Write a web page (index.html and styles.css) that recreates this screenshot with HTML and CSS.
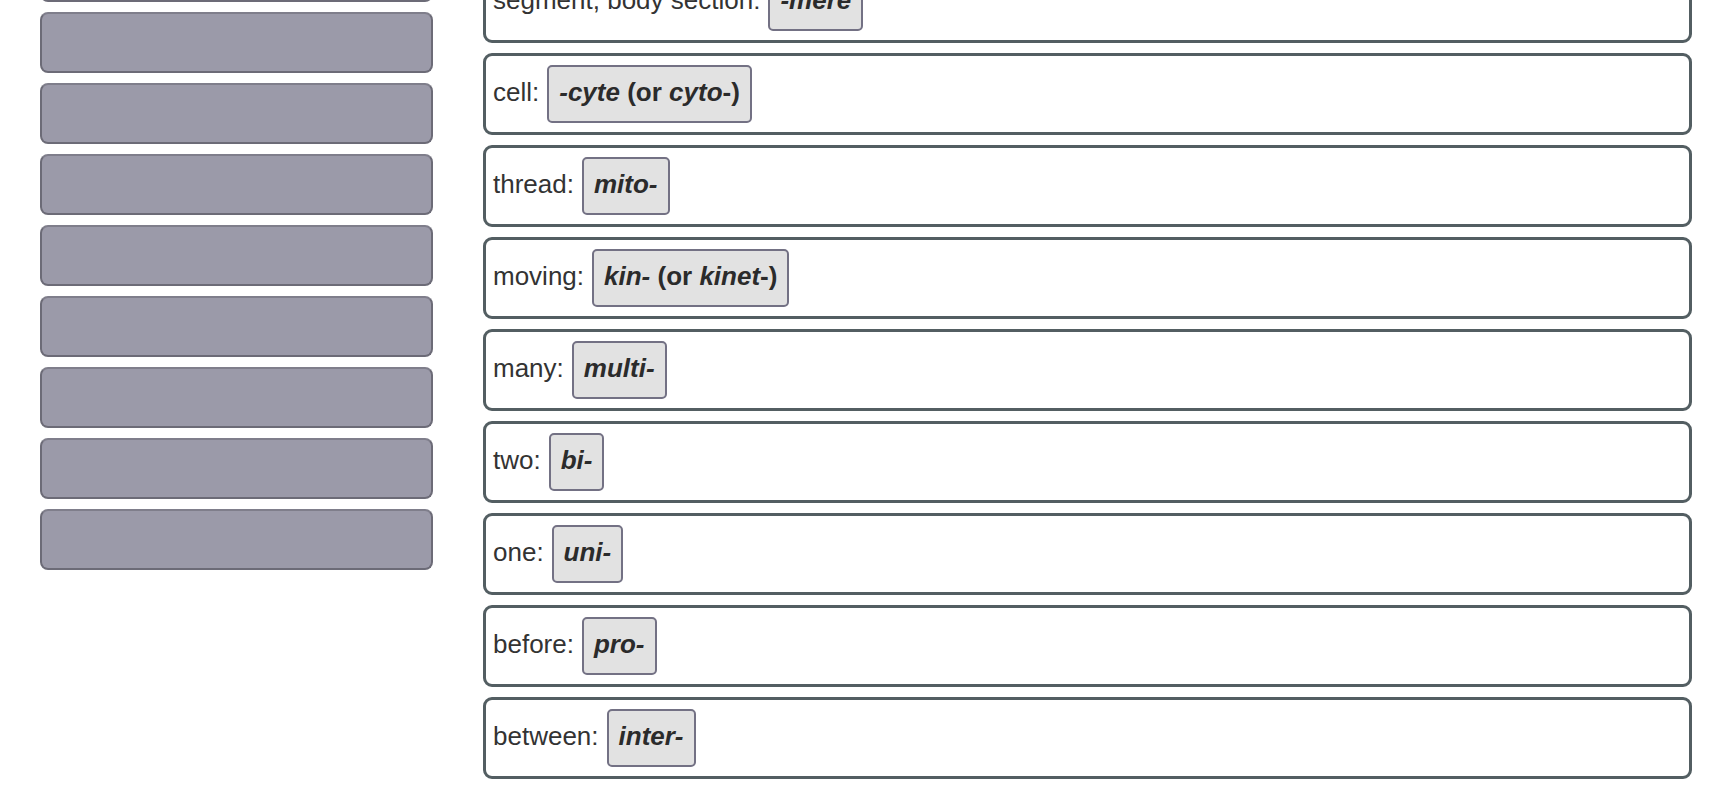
FILE: index.html
```html
<!DOCTYPE html>
<html lang="en">
<head>
<meta charset="utf-8">
<title>Word parts</title>
<link rel="stylesheet" href="styles.css">
</head>
<body>
<div class="board">
  <div class="slots">
    <div class="slot"></div>
    <div class="slot"></div>
    <div class="slot"></div>
    <div class="slot"></div>
    <div class="slot"></div>
    <div class="slot"></div>
    <div class="slot"></div>
    <div class="slot"></div>
    <div class="slot"></div>
  </div>
  <div class="items">
    <div class="item"><span class="label">segment, body section:</span><span class="tile"><i>-mere</i></span></div>
    <div class="item"><span class="label">cell:</span><span class="tile"><i>-cyte</i> (or <i>cyto</i>-)</span></div>
    <div class="item"><span class="label">thread:</span><span class="tile"><i>mito-</i></span></div>
    <div class="item"><span class="label">moving:</span><span class="tile"><i>kin-</i> (or <i>kinet</i>-)</span></div>
    <div class="item"><span class="label">many:</span><span class="tile"><i>multi-</i></span></div>
    <div class="item"><span class="label">two:</span><span class="tile"><i>bi-</i></span></div>
    <div class="item"><span class="label">one:</span><span class="tile"><i>uni-</i></span></div>
    <div class="item"><span class="label">before:</span><span class="tile"><i>pro-</i></span></div>
    <div class="item"><span class="label">between:</span><span class="tile"><i>inter-</i></span></div>
  </div>
</div>
</body>
</html>
```
FILE: styles.css
```css
html, body {
  margin: 0;
  padding: 0;
  background: #ffffff;
  overflow: hidden;
}
body {
  font-family: "Liberation Sans", Arial, Helvetica, sans-serif;
  font-size: 26px;
  color: #333333;
}
.board {
  display: grid;
  grid-template-columns: 393px 1fr;
  column-gap: 50px;
  padding: 0 44px 0 40px;
  margin-top: -59px;
  align-items: start;
}
.slots {
  display: flex;
  flex-direction: column;
  gap: 10px;
}
.slot {
  height: 61px;
  box-sizing: border-box;
  background: #9b9aa9;
  border: 2px solid #6c6b77;
  border-top-color: #7f7e8b;
  border-radius: 8px;
}
.items {
  display: flex;
  flex-direction: column;
  gap: 10px;
  padding-top: 20px;
}
.item {
  height: 82px;
  box-sizing: border-box;
  border: 3px solid #535e62;
  border-radius: 9px;
  padding: 0 7px;
  display: flex;
  align-items: center;
  gap: 8px;
}
.label {
  white-space: nowrap;
  padding-bottom: 4px;
}
.tile {
  display: inline-block;
  box-sizing: border-box;
  height: 58px;
  line-height: 50px;
  padding: 0 10px 4px;
  background: #e2e2e2;
  border: 2px solid #737184;
  border-radius: 5px;
  font-weight: bold;
  color: #2b2b2b;
  white-space: nowrap;
}
.tile i {
  font-style: italic;
}
```
